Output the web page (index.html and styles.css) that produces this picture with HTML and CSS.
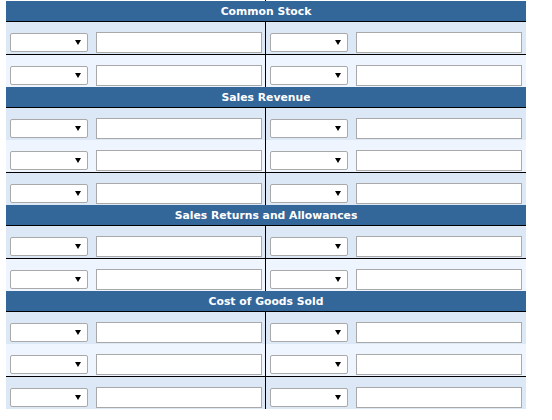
FILE: index.html
```html
<!DOCTYPE html>
<html>
<head>
<meta charset="utf-8">
<link rel="stylesheet" href="styles.css">
</head>
<body>
<div class="sheet">
  <div class="strip"><div class="strip-left"></div><div></div></div>

  <div class="section">
    <div class="head">Common Stock</div>
    <div class="row odd">
      <div class="cell left"><div class="sel"><svg class="arrow" width="6" height="5" viewBox="0 0 6 5"><polygon points="0,0 6,0 3,5"/></svg></div><input class="amt" type="text"></div>
      <div class="cell right"><div class="sel"><svg class="arrow" width="6" height="5" viewBox="0 0 6 5"><polygon points="0,0 6,0 3,5"/></svg></div><input class="amt" type="text"></div>
    </div>
    <div class="row even last">
      <div class="cell left"><div class="sel"><svg class="arrow" width="6" height="5" viewBox="0 0 6 5"><polygon points="0,0 6,0 3,5"/></svg></div><input class="amt" type="text"></div>
      <div class="cell right"><div class="sel"><svg class="arrow" width="6" height="5" viewBox="0 0 6 5"><polygon points="0,0 6,0 3,5"/></svg></div><input class="amt" type="text"></div>
    </div>
  </div>

  <div class="section">
    <div class="head">Sales Revenue</div>
    <div class="row odd">
      <div class="cell left"><div class="sel"><svg class="arrow" width="6" height="5" viewBox="0 0 6 5"><polygon points="0,0 6,0 3,5"/></svg></div><input class="amt" type="text"></div>
      <div class="cell right"><div class="sel"><svg class="arrow" width="6" height="5" viewBox="0 0 6 5"><polygon points="0,0 6,0 3,5"/></svg></div><input class="amt" type="text"></div>
    </div>
    <div class="row even">
      <div class="cell left"><div class="sel"><svg class="arrow" width="6" height="5" viewBox="0 0 6 5"><polygon points="0,0 6,0 3,5"/></svg></div><input class="amt" type="text"></div>
      <div class="cell right"><div class="sel"><svg class="arrow" width="6" height="5" viewBox="0 0 6 5"><polygon points="0,0 6,0 3,5"/></svg></div><input class="amt" type="text"></div>
    </div>
    <div class="row odd last">
      <div class="cell left"><div class="sel"><svg class="arrow" width="6" height="5" viewBox="0 0 6 5"><polygon points="0,0 6,0 3,5"/></svg></div><input class="amt" type="text"></div>
      <div class="cell right"><div class="sel"><svg class="arrow" width="6" height="5" viewBox="0 0 6 5"><polygon points="0,0 6,0 3,5"/></svg></div><input class="amt" type="text"></div>
    </div>
  </div>

  <div class="section">
    <div class="head">Sales Returns and Allowances</div>
    <div class="row odd">
      <div class="cell left"><div class="sel"><svg class="arrow" width="6" height="5" viewBox="0 0 6 5"><polygon points="0,0 6,0 3,5"/></svg></div><input class="amt" type="text"></div>
      <div class="cell right"><div class="sel"><svg class="arrow" width="6" height="5" viewBox="0 0 6 5"><polygon points="0,0 6,0 3,5"/></svg></div><input class="amt" type="text"></div>
    </div>
    <div class="row even last">
      <div class="cell left"><div class="sel"><svg class="arrow" width="6" height="5" viewBox="0 0 6 5"><polygon points="0,0 6,0 3,5"/></svg></div><input class="amt" type="text"></div>
      <div class="cell right"><div class="sel"><svg class="arrow" width="6" height="5" viewBox="0 0 6 5"><polygon points="0,0 6,0 3,5"/></svg></div><input class="amt" type="text"></div>
    </div>
  </div>

  <div class="section">
    <div class="head">Cost of Goods Sold</div>
    <div class="row odd">
      <div class="cell left"><div class="sel"><svg class="arrow" width="6" height="5" viewBox="0 0 6 5"><polygon points="0,0 6,0 3,5"/></svg></div><input class="amt" type="text"></div>
      <div class="cell right"><div class="sel"><svg class="arrow" width="6" height="5" viewBox="0 0 6 5"><polygon points="0,0 6,0 3,5"/></svg></div><input class="amt" type="text"></div>
    </div>
    <div class="row even">
      <div class="cell left"><div class="sel"><svg class="arrow" width="6" height="5" viewBox="0 0 6 5"><polygon points="0,0 6,0 3,5"/></svg></div><input class="amt" type="text"></div>
      <div class="cell right"><div class="sel"><svg class="arrow" width="6" height="5" viewBox="0 0 6 5"><polygon points="0,0 6,0 3,5"/></svg></div><input class="amt" type="text"></div>
    </div>
    <div class="row odd last">
      <div class="cell left"><div class="sel"><svg class="arrow" width="6" height="5" viewBox="0 0 6 5"><polygon points="0,0 6,0 3,5"/></svg></div><input class="amt" type="text"></div>
      <div class="cell right"><div class="sel"><svg class="arrow" width="6" height="5" viewBox="0 0 6 5"><polygon points="0,0 6,0 3,5"/></svg></div><input class="amt" type="text"></div>
    </div>
  </div>
</div>
</body>
</html>
```
FILE: styles.css
```css
html, body {
  margin: 0;
  padding: 0;
  background: #ffffff;
}
body {
  font-family: "DejaVu Sans", Verdana, sans-serif;
}
.sheet {
  margin-left: 6px;
  width: 520px;
}
.strip {
  display: grid;
  grid-template-columns: 260px 260px;
  height: 1px;
}
.strip-left {
  border-right: 1px solid #000;
}
.head {
  height: 19px;
  padding-top: 1px;
  line-height: 19px;
  background: #336699;
  color: #ffffff;
  font-weight: bold;
  font-size: 10.8px;
  text-align: center;
  border-bottom: 1px solid #000;
}
.row {
  display: grid;
  grid-template-columns: 260px 260px;
}
.row.odd { background: #dde8f7; }
.row.even { background: #eef5fe; }
.row.last { border-top: 1px solid #000; }
.cell {
  box-sizing: border-box;
  height: 32px;
  padding: 10px 0 1px 4px;
  display: flex;
  align-items: center;
  gap: 8px;
}
.cell.left {
  border-right: 1px solid #000;
}
.sel {
  box-sizing: border-box;
  width: 78px;
  height: 19px;
  background: #ffffff;
  border: 1px solid #a9a9a9;
  border-radius: 2px;
  display: flex;
  align-items: center;
  justify-content: flex-end;
  padding-right: 6px;
}
.arrow {
  display: block;
  fill: #000;
}
.amt {
  box-sizing: border-box;
  width: 166px;
  height: 21px;
  margin: 0;
  padding: 0;
  border: 1px solid #a9a9a9;
  background: #ffffff;
  outline: none;
}
```
